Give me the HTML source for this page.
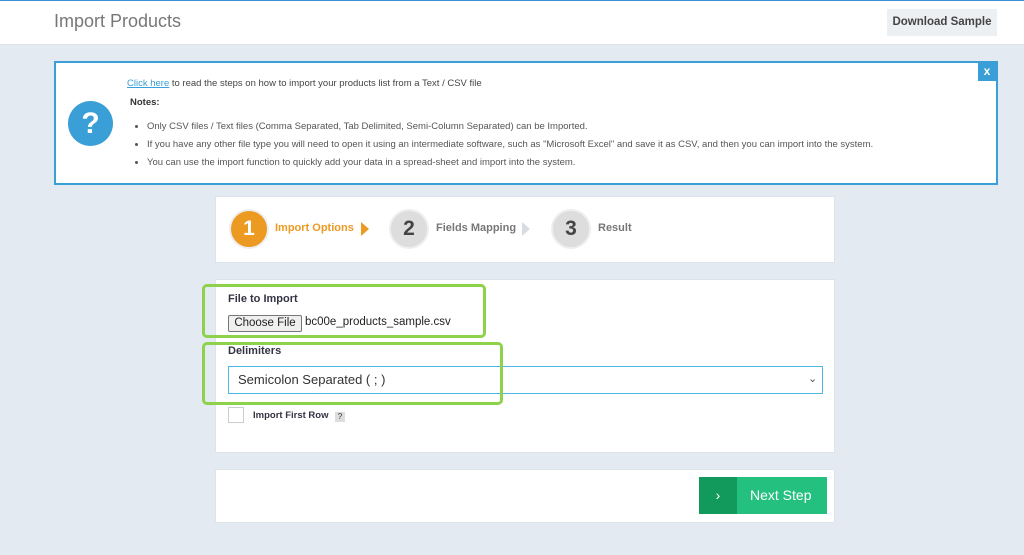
<!DOCTYPE html>
<html><head><style>
*{box-sizing:border-box;margin:0;padding:0}
body{width:1024px;height:555px;background:#e3eaf1;font-family:"Liberation Sans",sans-serif;position:relative;overflow:hidden;color:#333}
.abs{position:absolute}
</style></head><body>
<div class="abs" style="left:0;top:0;width:1024px;height:45px;background:#fff;border-top:1px solid #3b8fd0;border-bottom:1px solid #dde3ea"></div>
<div class="abs" style="left:54px;top:11px;font-size:18px;color:#777">Import Products</div>
<div class="abs" style="left:887px;top:9px;width:110px;height:27px;background:#edf0f2;font-size:11.5px;font-weight:bold;color:#444;text-align:center;line-height:27px">Download Sample</div>

<div class="abs" style="left:54px;top:61px;width:944px;height:124px;background:#fff;border:2px solid #3a9fd6"></div>
<div class="abs" style="left:978px;top:62px;width:18px;height:19px;background:#3a9fd6;color:#fff;font-weight:bold;font-size:12px;text-align:center;line-height:19px">x</div>
<div class="abs" style="left:68px;top:101px;width:45px;height:45px;border-radius:50%;background:#3a9fd6;color:#fff;font-weight:bold;font-size:30px;text-align:center;line-height:45px">?</div>
<div class="abs" style="left:127px;top:78px;font-size:9.5px;color:#444"><span style="color:#3a9fd6;text-decoration:underline">Click here</span> to read the steps on how to import your products list from a Text / CSV file</div>
<div class="abs" style="left:130px;top:97px;font-size:9.5px;font-weight:bold;color:#333">Notes:</div>
<ul class="abs" style="left:147px;top:118px;font-size:9.5px;color:#555;line-height:18px;width:840px">
<li>Only CSV files / Text files (Comma Separated, Tab Delimited, Semi-Column Separated) can be Imported.</li>
<li>If you have any other file type you will need to open it using an intermediate software, such as "Microsoft Excel" and save it as CSV, and then you can import into the system.</li>
<li>You can use the import function to quickly add your data in a spread-sheet and import into the system.</li>
</ul>

<div class="abs" style="left:215px;top:196px;width:620px;height:67px;background:#fff;border:1px solid #dde3ea"></div>
<div class="abs" style="left:229px;top:209px;width:40px;height:40px;border-radius:50%;background:#ec9a22;border:2px solid #eee;color:#fff;font-size:21px;font-weight:bold;text-align:center;line-height:36px">1</div>
<div class="abs" style="left:275px;top:222px;font-size:11px;font-weight:bold;color:#ec9a22">Import Options</div>
<div class="abs" style="left:361px;top:222px;width:0;height:0;border-left:8px solid #ec9a22;border-top:7px solid transparent;border-bottom:7px solid transparent"></div>
<div class="abs" style="left:389px;top:209px;width:40px;height:40px;border-radius:50%;background:#ddd;border:2px solid #eee;color:#444;font-size:21px;font-weight:bold;text-align:center;line-height:36px">2</div>
<div class="abs" style="left:436px;top:222px;font-size:11px;font-weight:bold;color:#777">Fields Mapping</div>
<div class="abs" style="left:522px;top:222px;width:0;height:0;border-left:8px solid #d6dde3;border-top:7px solid transparent;border-bottom:7px solid transparent"></div>
<div class="abs" style="left:551px;top:209px;width:40px;height:40px;border-radius:50%;background:#ddd;border:2px solid #eee;color:#444;font-size:21px;font-weight:bold;text-align:center;line-height:36px">3</div>
<div class="abs" style="left:598px;top:222px;font-size:11px;font-weight:bold;color:#777">Result</div>

<div class="abs" style="left:215px;top:279px;width:620px;height:174px;background:#fff;border:1px solid #dde3ea"></div>
<div class="abs" style="left:228px;top:293px;font-size:11px;font-weight:bold;color:#334">File to Import</div>
<div class="abs" style="left:228px;top:315px;width:74px;height:17px;background:#efefef;border:1px solid #777;border-radius:2px;font-size:11.5px;text-align:center;line-height:15px;color:#222">Choose File</div>
<div class="abs" style="left:305px;top:316px;font-size:11.5px;color:#222">bc00e_products_sample.csv</div>
<div class="abs" style="left:228px;top:345px;font-size:11px;font-weight:bold;color:#334">Delimiters</div>
<div class="abs" style="left:228px;top:366px;width:595px;height:28px;border:1px solid #4ab8e0;font-size:13px;color:#333;line-height:26px;padding-left:9px">Semicolon Separated ( ; )</div>
<div class="abs" style="left:808px;top:372px;font-size:11px;color:#555">&#8964;</div>
<div class="abs" style="left:228px;top:407px;width:16px;height:16px;border:1px solid #ccc"></div>
<div class="abs" style="left:253px;top:410px;font-size:9.5px;font-weight:bold;color:#334">Import First Row</div>
<div class="abs" style="left:335px;top:412px;width:10px;height:10px;background:#ddd;font-size:8px;text-align:center;line-height:10px;color:#333">?</div>
<div class="abs" style="left:202px;top:284px;width:284px;height:54px;border:3px solid #8ed24c;border-radius:5px"></div>
<div class="abs" style="left:202px;top:342px;width:301px;height:63px;border:3px solid #8ed24c;border-radius:5px"></div>

<div class="abs" style="left:215px;top:469px;width:620px;height:54px;background:#fff;border:1px solid #dde3ea"></div>
<div class="abs" style="left:699px;top:477px;width:128px;height:37px;background:#23c07f"></div>
<div class="abs" style="left:699px;top:477px;width:38px;height:37px;background:#129a5d;color:#fff;font-size:14px;text-align:center;line-height:37px">›</div>
<div class="abs" style="left:750px;top:487px;font-size:14px;color:#fff">Next Step</div>
</body></html>
